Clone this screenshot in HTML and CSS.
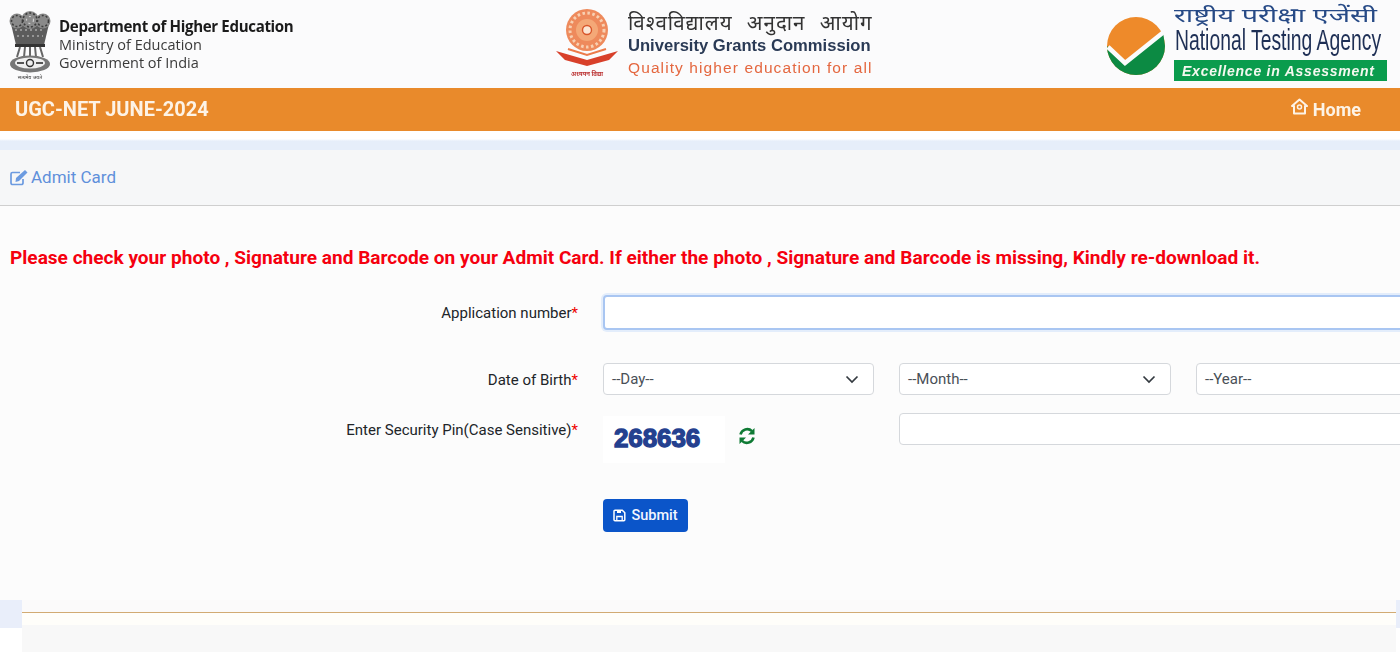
FILE: index.html
```html
<!DOCTYPE html>
<html lang="en">
<head>
<meta charset="utf-8">
<title>UGC-NET JUNE-2024 Admit Card</title>
<link rel="stylesheet" href="styles.css">
</head>
<body>
<header class="masthead">
  <div class="brand-left">
    <svg class="emblem" width="46" height="84" viewBox="0 0 46 84">
      <path d="M4 24Q23 17 42 24L37 45H9z" fill="#5c5c5c"/>
      <g fill="#8a8a8a">
        <circle cx="23" cy="20" r="9"/>
        <circle cx="10" cy="21" r="7.500"/>
        <circle cx="36" cy="21" r="7.500"/>
      </g>
      <g fill="none" stroke="#3d3d3d" stroke-width="1.600" stroke-dasharray="2 2">
        <circle cx="23" cy="20" r="7"/>
        <circle cx="10" cy="21" r="5.500"/>
        <circle cx="36" cy="21" r="5.500"/>
      </g>
      <g fill="none" stroke="#cfcfcf" stroke-width="1.200" stroke-dasharray="2 3">
        <circle cx="23" cy="20" r="3.500"/>
        <path d="M8 30h30M10 36h26"/>
      </g>
      <path d="M8 44h30v3H8z" fill="#333"/>
      <path d="M13 47l-3 10M18 47l-1 10M23 47v10M28 47l1 10M33 47l3 10" stroke="#666" stroke-width="2" fill="none"/>
      <ellipse cx="23" cy="64" rx="20" ry="8.500" fill="#777"/>
      <ellipse cx="23" cy="63" rx="15" ry="5.500" fill="#efefef"/>
      <circle cx="23" cy="63" r="3.500" fill="none" stroke="#333" stroke-width="1.400"/>
      <path d="M10 63h7M29 63h7" stroke="#555" stroke-width="2"/>
      <text x="23" y="79" class="emblem-text" text-anchor="middle">सत्यमेव जयते</text>
    </svg>
    <div class="dept">
      <strong class="dept-name">Department of Higher Education</strong>
      <span class="dept-line">Ministry of Education</span>
      <span class="dept-line">Government of India</span>
    </div>
  </div>
  <div class="brand-center">
    <svg class="ugc-logo" width="62" height="84" viewBox="0 0 62 84">
      <circle cx="31" cy="30" r="21" fill="#ee8a5c"/>
      <circle cx="31" cy="30" r="17" fill="none" stroke="#f8d0b2" stroke-width="3" stroke-dasharray="2.500 2.500"/>
      <circle cx="31" cy="30" r="11" fill="#f4a877"/>
      <circle cx="31" cy="30" r="4.500" fill="#fbe6d4" stroke="#d8562a" stroke-width="1.400"/>
      <path d="M0 51l31 9 31-9-9 9-22 6-22-6z" fill="#d8402a"/>
      <path d="M12 49l19 6 19-6" fill="none" stroke="#ec7a4a" stroke-width="2"/>
      <text x="31" y="76" class="ugc-tiny" text-anchor="middle">अध्ययन विद्या</text>
    </svg>
    <div class="ugc-text">
      <span class="ugc-hi">विश्वविद्यालय अनुदान आयोग</span>
      <strong class="ugc-en">University Grants Commission</strong>
      <span class="ugc-tag">Quality higher education for all</span>
    </div>
  </div>
  <svg class="nta-logo" width="280" height="84" viewBox="0 0 280 84">
    <circle cx="29" cy="46" r="29" fill="#ee8a2a"/>
    <path d="M0 46L18 63 56 32 58 46A29 29 0 0 1 0 46z" fill="#0c8a43"/>
    <path d="M1 47L18 63 58 31" fill="none" stroke="#fbfbfc" stroke-width="4.500"/>
    <text x="67" y="22" class="nta-hi" textLength="203" lengthAdjust="spacingAndGlyphs">राष्ट्रीय परीक्षा एजेंसी</text>
    <g transform="translate(68 50) scale(.665 1)">
      <text class="nta-en" textLength="310" lengthAdjust="spacingAndGlyphs">National Testing Agency</text>
    </g>
    <rect x="67" y="60" width="213" height="21" fill="#0a9c4d"/>
    <text x="75" y="76" class="nta-tag" textLength="192" lengthAdjust="spacing">Excellence in Assessment</text>
  </svg>
</header>

<nav class="topbar">
  <span class="topbar-title">UGC-NET JUNE-2024</span>
  <a class="home-link" href="#">
    <svg width="17" height="17" viewBox="0 0 17 17"><path d="M8.500 1.500L16 8h-2v7.500H3V8H1z" fill="none" stroke="#fdf3e6" stroke-width="2" stroke-linejoin="round"/><circle cx="8.500" cy="9" r="2" fill="none" stroke="#fdf3e6" stroke-width="1.500"/></svg>
    Home
  </a>
</nav>
<div class="strip"></div>

<main class="card">
  <div class="card-head">
    <svg width="18" height="17" viewBox="0 0 18 17"><path d="M13 10v4a1.500 1.500 0 0 1-1.500 1.500h-9A1.500 1.500 0 0 1 1 14V5a1.500 1.500 0 0 1 1.500-1.500H10" fill="none" stroke="#6c9be0" stroke-width="1.700"/><path d="M6 9l9-8 2.500 2.500-8.500 8.500-3.500 1z" fill="#6c9be0"/></svg>
    <span>Admit Card</span>
  </div>
  <div class="card-body">
    <p class="notice">Please check your photo , Signature and Barcode on your Admit Card. If either the photo , Signature and Barcode is missing, Kindly re-download it.</p>
    <div class="row row-app">
      <label class="label label-app">Application number<em>*</em></label>
      <input class="control control-focus span-all" type="text">
    </div>
    <div class="row row-dob">
      <label class="label">Date of Birth<em>*</em></label>
      <div class="control select"><span>--Day--</span><svg width="14" height="9" viewBox="0 0 14 9"><path d="M1.500 1.500L7 7l5.500-5.500" fill="none" stroke="#343a40" stroke-width="1.700"/></svg></div>
      <div class="control select"><span>--Month--</span><svg width="14" height="9" viewBox="0 0 14 9"><path d="M1.500 1.500L7 7l5.500-5.500" fill="none" stroke="#343a40" stroke-width="1.700"/></svg></div>
      <div class="control select"><span>--Year--</span></div>
    </div>
    <div class="row row-pin">
      <label class="label">Enter Security Pin(Case Sensitive)<em>*</em></label>
      <div class="captcha-cell">
        <div class="captcha"><span>268636</span></div>
        <svg class="refresh" width="18" height="18" viewBox="0 0 18 18"><path d="M2.500 7.500A6.800 6.800 0 0 1 14 4.200M15.500 10.500A6.800 6.800 0 0 1 4 13.800" fill="none" stroke="#0f7a34" stroke-width="2.600"/><path d="M16.500 1v6.500H10zM1.500 17v-6.500H8z" fill="#0f7a34"/></svg>
      </div>
      <input class="control span-rest" type="text">
    </div>
    <div class="row row-submit">
      <button class="submit" type="button">
        <svg width="13" height="13" viewBox="0 0 13 13"><path d="M2 1.200h7.300L11.800 3.700V10.800a1 1 0 0 1-1 1H2a1 1 0 0 1-1-1V2.200a1 1 0 0 1 1-1z" fill="none" stroke="#fff" stroke-width="1.500"/><path d="M4 1.500h4v2.500H4z" fill="#fff"/><path d="M3.800 11.500V7.500h5.400v4" fill="none" stroke="#fff" stroke-width="1.300"/></svg>
        Submit
      </button>
    </div>
  </div>
</main>

<footer class="foot">
  <div class="foot-inner"></div>
</footer>
</body>
</html>
```
FILE: styles.css
```css
* { box-sizing: border-box; }
html, body { margin: 0; padding: 0; }
body {
  width: 1400px;
  height: 656px;
  overflow: hidden;
  background: #fff;
  font-family: Roboto, "Noto Sans", sans-serif;
  color: #212529;
}

.masthead {
  height: 88px;
  padding-left: 7px;
  padding-right: 13px;
  background: #fbfbfc;
  display: grid;
  grid-template-columns: 549px 1fr 280px;
  align-items: start;
  filter: blur(.3px);
}
.brand-left { display: flex; gap: 6px; }
.emblem-text { font: 400 5px "Noto Sans", sans-serif; fill: #333; }
.dept { display: flex; flex-direction: column; padding-top: 16px; }
.dept-name { font: 700 15.100px/20px "Open Sans", sans-serif; color: #1b1b1b; letter-spacing: -.35px; white-space: nowrap; }
.dept-line { font: 400 14.500px/18px "Open Sans", sans-serif; color: #3a3a3a; white-space: nowrap; }

.brand-center { display: flex; gap: 10px; }
.ugc-tiny { font: 700 6px "Noto Sans", sans-serif; fill: #b33; }
.ugc-text { display: flex; flex-direction: column; white-space: nowrap; padding-top: 9px; }
.ugc-hi { font: 400 20.500px/26px "Noto Sans", "Liberation Serif", serif; color: #333; letter-spacing: 1px; word-spacing: 8px; }
.ugc-en { font: 700 16.600px/22px "Liberation Sans", sans-serif; color: #2a3a55; }
.ugc-tag { font: 400 15.500px/21px "Liberation Sans", sans-serif; color: #e4673f; letter-spacing: 1.100px; }

.nta-logo { display: block; }
.nta-hi { font: 400 19px "Noto Sans", sans-serif; fill: #274a86; }
.nta-en { font: 400 29px "Liberation Sans", sans-serif; fill: #1e2f55; }
.nta-tag { font: italic 700 14px "Liberation Sans", sans-serif; fill: #f4f8ef; }

.topbar {
  height: 43px;
  background: #e98a2b;
  display: flex;
  align-items: center;
  justify-content: space-between;
  padding: 0 39px 2px 15px;
  filter: blur(.3px);
}
.topbar-title { font-weight: 700; font-size: 20px; color: #fdf3e6; }
.home-link { display: flex; align-items: center; gap: 5px; margin-top: 2px; font-weight: 700; font-size: 18px; color: #fdf3e6; text-decoration: none; }
.home-link svg { margin-top: -7px; }

.strip { height: 19px; background: linear-gradient(#fff 0 8px, #e6eefa 10px); }

.card { background: #fcfcfc; }
.card-head {
  height: 56px;
  background: #f6f7f8;
  border-bottom: 1px solid #cfcfcf;
  padding: 0 10px 1px;
  display: flex;
  align-items: center;
  gap: 3px;
  color: #5f90db;
  font-size: 17px;
}
.card-body { height: 394px; padding-top: 40px; }
.notice {
  margin: 0 0 25px;
  padding-left: 10px;
  font-weight: 700;
  font-size: 19.070px;
  line-height: 24px;
  color: #f5000f;
  white-space: nowrap;
}

.row {
  display: grid;
  grid-template-columns: 578px 271px 272px 271px;
  column-gap: 25px;
  width: 1500px;
}
.row-app { height: 35px; margin-bottom: 33px; }
.row-dob { height: 32px; margin-bottom: 18px; }
.row-pin { height: 50px; margin-bottom: 36px; }
.row-submit { height: 33px; }

.label {
  text-align: right;
  font-size: 15px;
  font-weight: 400;
  color: #212529;
  padding-top: 8px;
  white-space: nowrap;
}
.label-app { padding-top: 9px; }
.label em { color: #e00; font-style: normal; }

.control {
  height: 32px;
  background: #fff;
  border: 1px solid #d5d8dc;
  border-radius: 4px;
  font: 400 15px Roboto, sans-serif;
  color: #495057;
}
.control-focus {
  height: 35px;
  border: 2px solid #a9c6f2;
  box-shadow: 0 0 0 2px #e3edfb;
}
.span-all { grid-column: 2 / span 3; }
.span-rest { grid-column: 3 / span 2; }

.select {
  display: flex;
  align-items: center;
  justify-content: space-between;
  padding: 0 14px 0 8px;
}

.captcha-cell { display: flex; align-items: flex-start; gap: 13px; padding-top: 3px; }
.captcha {
  width: 122px;
  height: 47px;
  background: #fff;
  padding: 8px 0 0 11px;
}
.captcha span {
  font: 700 26px/28px "Liberation Sans", sans-serif;
  color: #24408f;
  letter-spacing: -.1px;
  -webkit-text-stroke: 1.300px #24408f;
}
.refresh { margin-top: 11px; }

.submit {
  grid-column: 2;
  justify-self: start;
  width: 85px;
  height: 33px;
  background: #0b55c9;
  border: 0;
  border-radius: 4px;
  color: #f2f6ff;
  font: 500 14.500px Roboto, sans-serif;
  display: flex;
  align-items: center;
  justify-content: center;
  gap: 5px;
  padding: 0;
}

.foot {
  height: 56px;
  background: linear-gradient(#e9eefa 0 28px, #fff 28px);
  padding: 0 4px 4px 22px;
}
.foot-inner {
  height: 52px;
  background: linear-gradient(#fbfafa 0 12px, #d2ab73 12px 13px, #fffefa 13px 25px, #f8f8f8 25px);
}
```
